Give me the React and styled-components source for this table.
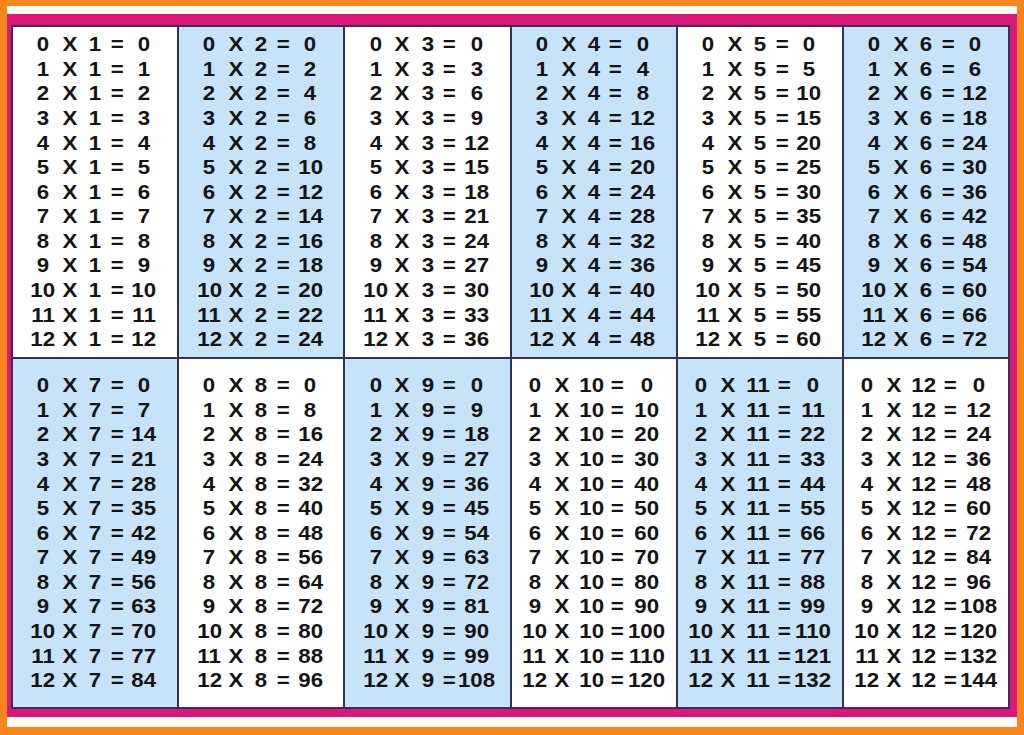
import React from "react";
import styled, { createGlobalStyle } from "styled-components";

const GlobalStyle = createGlobalStyle`
  html, body {
    margin: 0;
    padding: 0;
    background: #f5861c;
  }
`;

// orange outer edge
const Page = styled.div`
  box-sizing: border-box;
  width: 1024px;
  height: 735px;
  padding: 6px 7px 8px 7px;
  background: #f5861c;
`;

// thin cream band above and below the magenta frame
const Strip = styled.div`
  background: #fdfdf5;
  padding: 8px 0 10px;
`;

const Frame = styled.div`
  background: #db1879;
  padding: 11px 7px 8px 4px;
`;

const Board = styled.div`
  display: grid;
  grid-template-columns: repeat(6, 1fr);
  grid-template-rows: 330px 348px;
  gap: 2px;
  padding: 2px;
  background: #33305e;
`;

// one times table: columns are  a | X | n | = | result
const Cell = styled.div`
  background: ${(p) => (p.$blue ? "#c6e3f8" : "#ffffff")};
  display: grid;
  grid-template-columns: ${(p) =>
    p.$wide ? "30px 24px 36px 16px 42px" : "32px 22px 28px 16px 38px"};
  grid-auto-rows: 24.6px;
  justify-content: center;
  align-content: center;
  font-family: "Liberation Sans", Arial, sans-serif;
  font-weight: 700;
  font-size: 21px;
  line-height: 24.6px;
  color: #141414;
`;

const Part = styled.span`
  justify-self: center;
  display: inline-block;
  white-space: nowrap;
  transform: scaleX(1.06);
`;

const ROWS = Array.from({ length: 13 }, (_, i) => i);

const Table = ({ n, blue }) => (
  <Cell $blue={blue} $wide={n >= 10}>
    {ROWS.map((a) => (
      <React.Fragment key={a}>
        <Part>{a}</Part>
        <Part>X</Part>
        <Part>{n}</Part>
        <Part>=</Part>
        <Part>{a * n}</Part>
      </React.Fragment>
    ))}
  </Cell>
);

const App = () => {
  const tables = Array.from({ length: 12 }, (_, i) => i + 1);

  return (
    <>
      <GlobalStyle />
      <Page>
        <Strip>
          <Frame>
            <Board>
              {tables.map((n, i) => {
                const row = Math.floor(i / 6);
                const col = i % 6;
                return <Table key={n} n={n} blue={(row + col) % 2 === 1} />;
              })}
            </Board>
          </Frame>
        </Strip>
      </Page>
    </>
  );
};

export default App;
